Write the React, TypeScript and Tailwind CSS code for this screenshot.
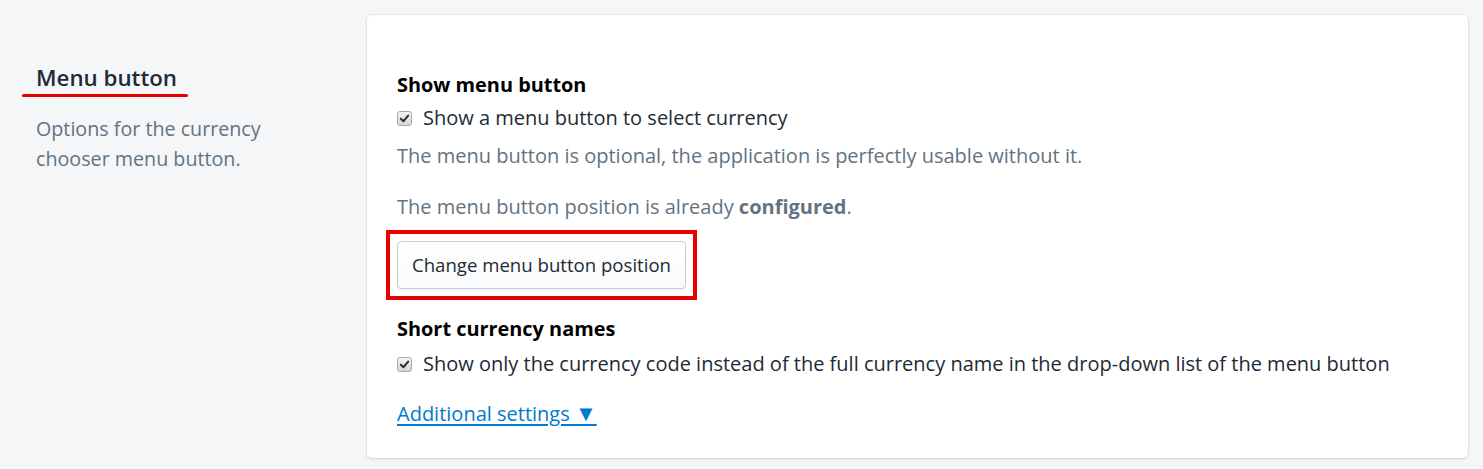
import React from "react";

function Check() {
  return (
    <span className="mt-[1px] flex h-[15px] w-[15px] shrink-0 items-center justify-center rounded-[3px] border border-[#a9a9a9] bg-gradient-to-b from-[#f4f4f4] to-[#d6d6d6]">
      <svg viewBox="0 0 12 12" className="h-[11px] w-[11px]">
        <path d="M2 6.2 L4.8 9 L10 2.8" fill="none" stroke="#333" strokeWidth="2.2" strokeLinecap="round" strokeLinejoin="round" />
      </svg>
    </span>
  );
}

export default function App() {
  return (
    <div
      className="flex h-[469px] w-[1483px] bg-[#f4f6f8] text-[#212b36]"
      style={{ fontFamily: '"Open Sans", "Noto Sans", sans-serif' }}
    >
      {/* left column */}
      <div className="w-[367px] shrink-0 pl-[22px] pt-[63px]">
        <div className="inline-block px-[14px] text-[22.3px] font-semibold leading-[30px] text-[#212b36]">
          Menu button
        </div>
        <div className="mt-[1px] h-[3px] w-[166px] rounded-full bg-[#e30000]" />
        <p className="mt-[17px] pl-[14px] text-[19.7px] leading-[30px] text-[#637381]">
          Options for the currency
          <br />
          chooser menu button.
        </p>
      </div>

      {/* card */}
      <div className="mt-[15px] h-[443px] w-[1101px] rounded-[5px] bg-white pl-[30px] pt-[57px] shadow-[0_0_0_1px_rgba(63,63,68,0.05),0_1px_3px_0_rgba(63,63,68,0.15)]">
        <div className="text-[19.9px] font-bold leading-[26px] text-black">Show menu button</div>
        <label className="mt-[7px] flex items-center gap-[11px] text-[20px] leading-[26px]">
          <Check />
          <span>Show a menu button to select currency</span>
        </label>
        <p className="mt-[12px] text-[20px] leading-[26px] text-[#637381]">
          The menu button is optional, the application is perfectly usable without it.
        </p>
        <p className="mt-[25px] text-[20px] leading-[26px] text-[#637381]">
          The menu button position is already <b className="font-bold">configured</b>.
        </p>
        <div className="-ml-[11px] mt-[10px] inline-block border-[4px] border-[#e80000] p-[7px]">
          <button className="h-[48px] rounded-[4px] border border-[#c4cdd5] bg-gradient-to-b from-white to-[#f9fafb] px-[14px] text-[18.6px] text-[#212b36] shadow-[0_1px_0_0_rgba(22,29,37,0.05)]">
            Change menu button position
          </button>
        </div>
        <div className="mt-[16px] text-[19.9px] font-bold leading-[26px] text-black">Short currency names</div>
        <label className="mt-[9px] flex items-center gap-[11px] text-[20px] leading-[26px]">
          <Check />
          <span>Show only the currency code instead of the full currency name in the drop-down list of the menu button</span>
        </label>
        <a href="#" className="mt-[24px] inline-block text-[20px] leading-[26px] text-[#007ace] underline underline-offset-[3px]">
          Additional settings <span className="text-[22px] leading-none">▼</span>
        </a>
      </div>
    </div>
  );
}
